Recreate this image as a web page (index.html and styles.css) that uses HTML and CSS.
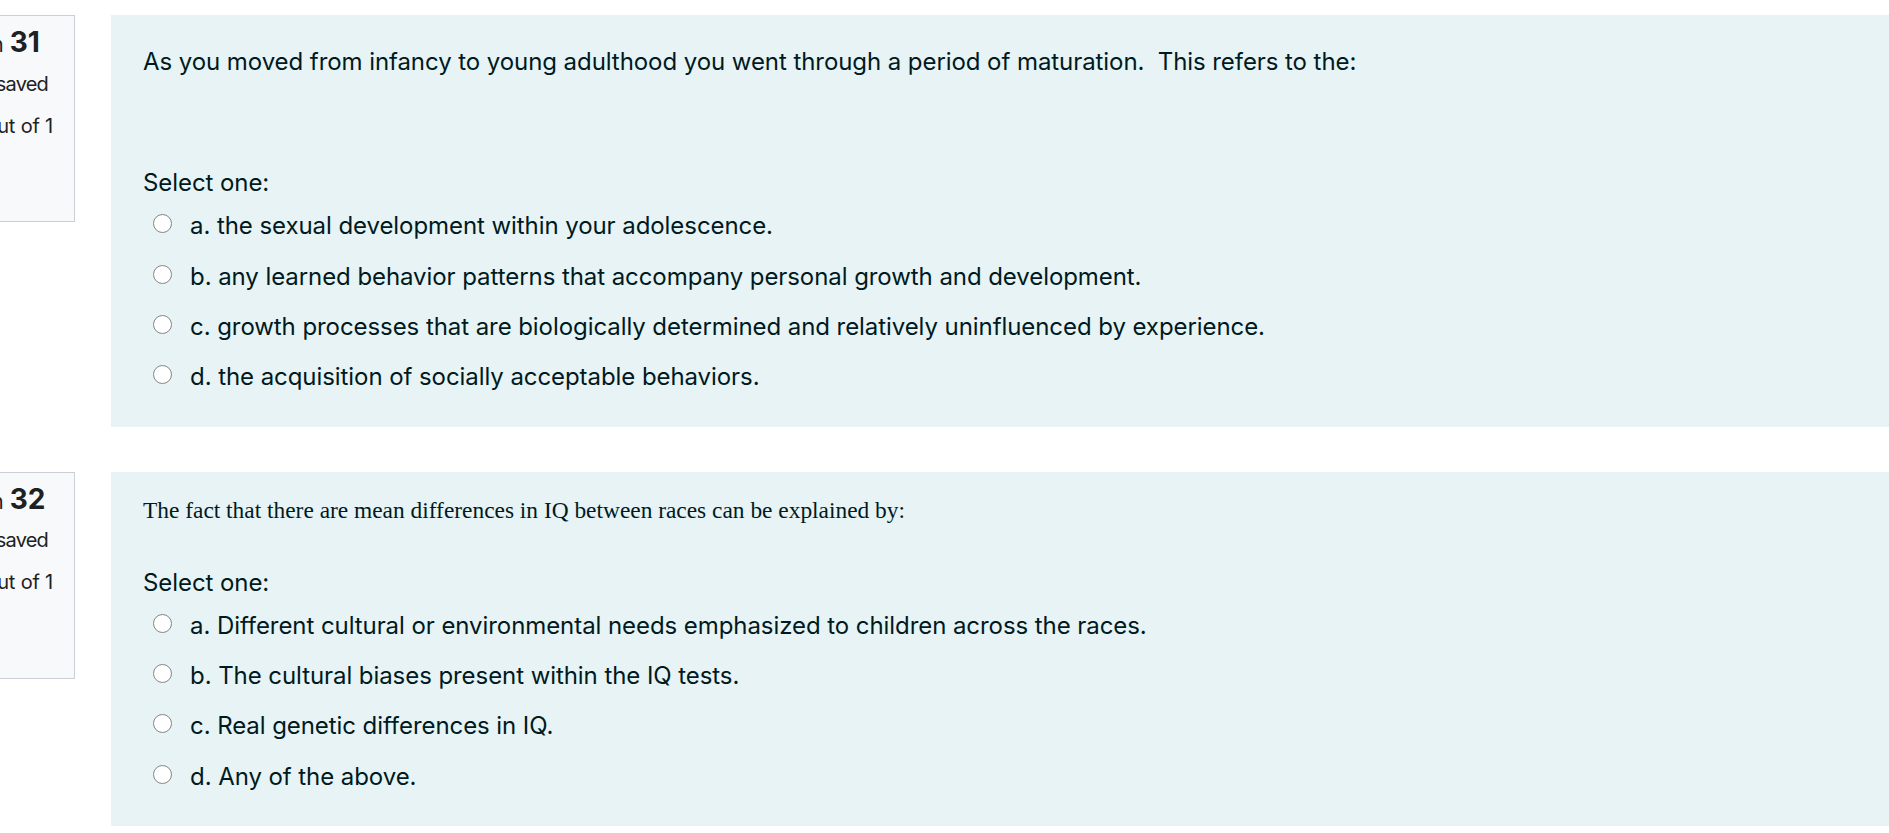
FILE: index.html
```html
<!DOCTYPE html>
<html lang="en">
<head>
<meta charset="utf-8">
<title>Quiz</title>
<link rel="stylesheet" href="styles.css">
</head>
<body>
<div class="que">
  <div class="info">
    <h3 class="no">Question <span class="qno">31</span></h3>
    <div class="state">Answer saved</div>
    <div class="grade">Points out of 1</div>
  </div>
  <div class="content">
    <div class="qtext">
      <p>As you moved from infancy to young adulthood you went through a period of maturation.&nbsp; This refers to the:</p>
      <p><br></p>
    </div>
    <div class="prompt">Select one:</div>
    <div class="answer">
      <label class="r"><input type="radio" name="q31"><span>a. the sexual development within your adolescence.</span></label>
      <label class="r"><input type="radio" name="q31"><span>b. any learned behavior patterns that accompany personal growth and development.</span></label>
      <label class="r"><input type="radio" name="q31"><span>c. growth processes that are biologically determined and relatively uninfluenced by experience.</span></label>
      <label class="r"><input type="radio" name="q31"><span>d. the acquisition of socially acceptable behaviors.</span></label>
    </div>
  </div>
</div>
<div class="que">
  <div class="info">
    <h3 class="no">Question <span class="qno">32</span></h3>
    <div class="state">Answer saved</div>
    <div class="grade">Points out of 1</div>
  </div>
  <div class="content">
    <div class="qtext qtext-serif">
      <p class="serif">The fact that there are mean differences in IQ between races can be explained by:</p>
    </div>
    <div class="prompt">Select one:</div>
    <div class="answer">
      <label class="r"><input type="radio" name="q32"><span>a. Different cultural or environmental needs emphasized to children across the races.</span></label>
      <label class="r"><input type="radio" name="q32"><span>b. The cultural biases present within the IQ tests.</span></label>
      <label class="r"><input type="radio" name="q32"><span>c. Real genetic differences in IQ.</span></label>
      <label class="r"><input type="radio" name="q32"><span>d. Any of the above.</span></label>
    </div>
  </div>
</div>
</body>
</html>
```
FILE: styles.css
```css
html, body {
  margin: 0;
  padding: 0;
  background: #ffffff;
  overflow: hidden;
}
body {
  padding-top: 15px;
  font-family: Inter, "Noto Sans", "Liberation Sans", sans-serif;
  color: #001a1e;
}
.que {
  display: flex;
  align-items: flex-start;
  margin-bottom: 45px;
}
.info {
  flex: 0 0 auto;
  box-sizing: border-box;
  width: 165px;
  height: 207px;
  margin-left: -90px;
  padding: 11px 0 0 4px;
  background: #f8f9fa;
  border: 1px solid #cad0d7;
  color: #1d2125;
  font-size: 20px;
  white-space: nowrap;
}
.no {
  margin: 0;
  font-size: 21px;
  font-weight: 400;
  line-height: 30px;
}
.qno {
  font-size: 28px;
  font-weight: 700;
}
.state {
  margin-top: 8.5px;
  padding-right: 26px;
  text-align: right;
  letter-spacing: -0.8px;
  line-height: 31px;
}
.grade {
  margin-top: 11px;
  padding-right: 21px;
  text-align: right;
  letter-spacing: -0.2px;
  line-height: 31px;
}
.content {
  flex: 1 1 auto;
  margin-left: 36px;
  background: #e7f3f5;
  padding: 29px 32px 24px 32px;
  font-size: 24px;
  line-height: 36px;
  letter-spacing: -0.07px;
}
.qtext {
  margin-bottom: 27px;
}
.qtext p {
  margin: 0;
}
.qtext p + p {
  margin-top: 22px;
}
.qtext-serif {
  margin-bottom: 41px;
}
.qtext .serif {
  margin-top: -4px;
  font-family: "Liberation Serif", "Times New Roman", serif;
  font-size: 23.4px;
  line-height: normal;
  letter-spacing: 0;
}
.answer {
  display: flex;
  flex-direction: column;
}
.r {
  display: flex;
  align-items: center;
  padding: 7.2px 0;
}
.r input {
  appearance: none;
  -webkit-appearance: none;
  box-sizing: border-box;
  width: 19px;
  height: 19px;
  margin: 0 18px 5px 10px;
  border: 1.5px solid #858585;
  border-radius: 50%;
  background: #ffffff;
  flex: 0 0 auto;
}
```
